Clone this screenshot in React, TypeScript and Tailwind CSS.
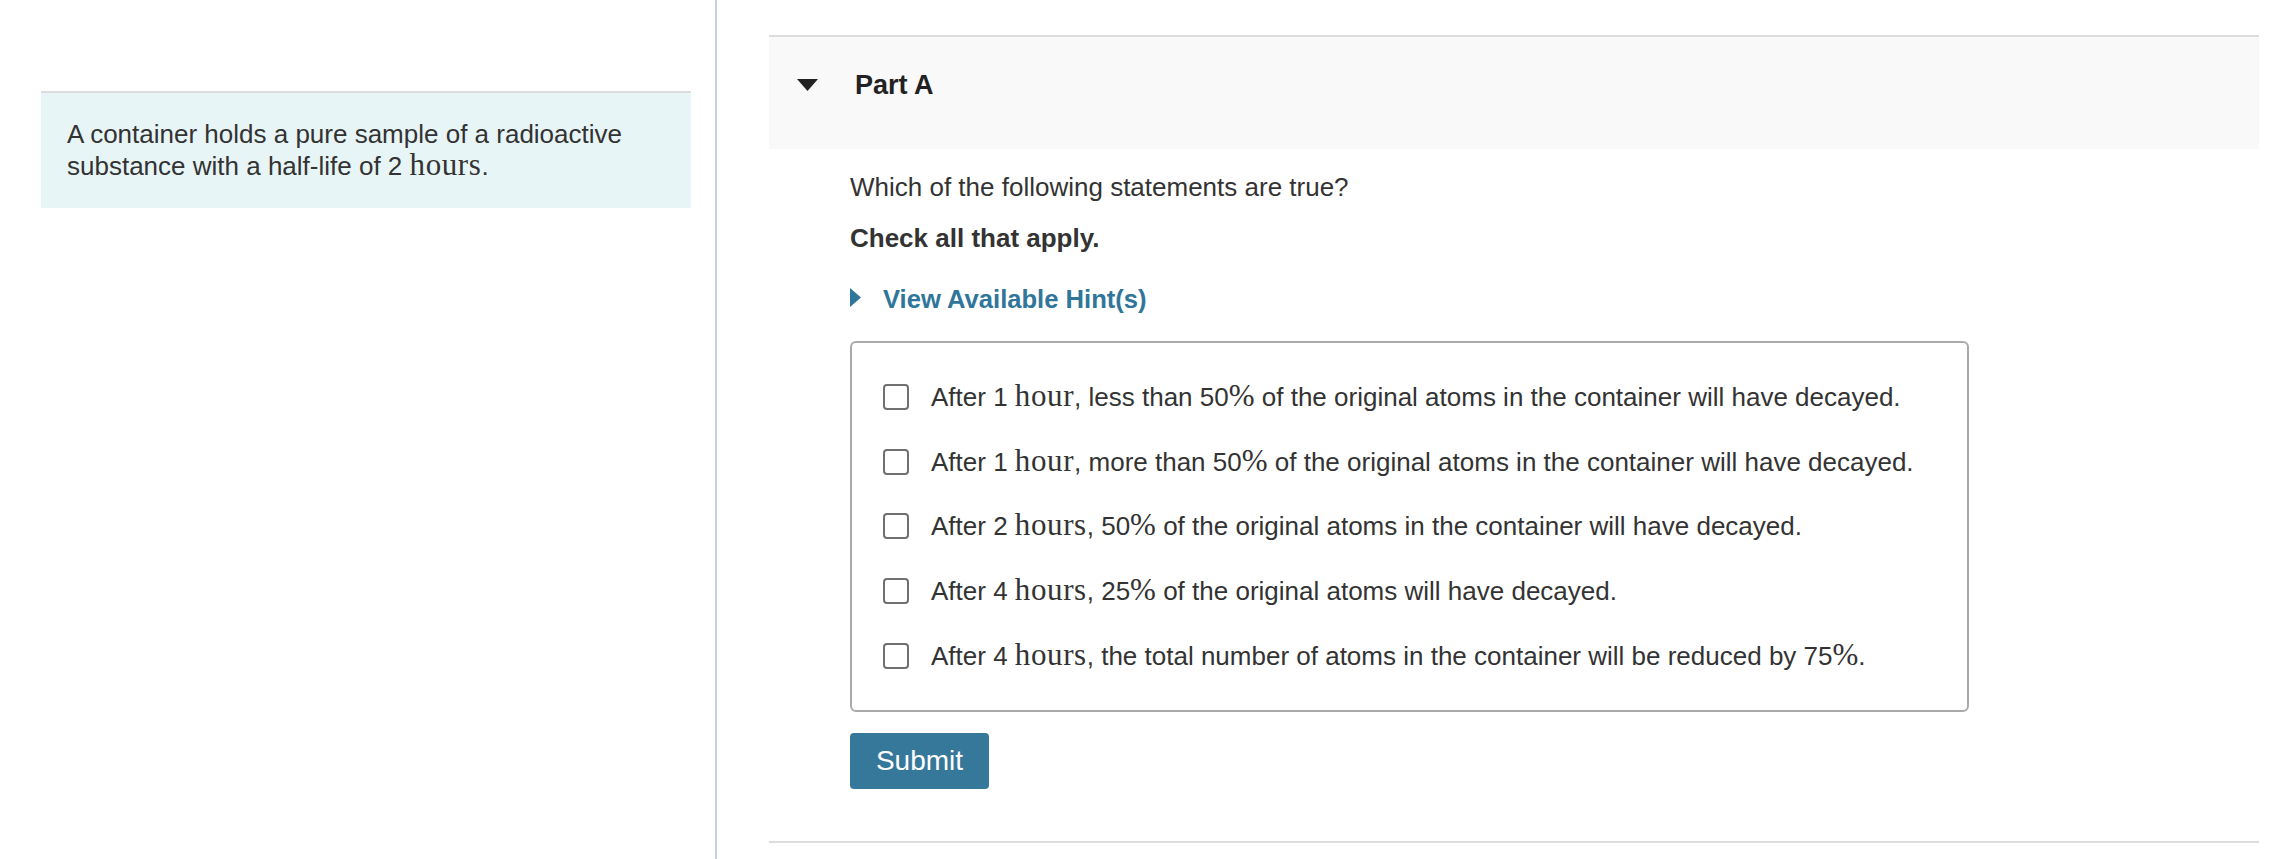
import React from "react";

function M({ children }: { children: React.ReactNode }) {
  return (
    <span className="font-['Liberation_Serif',serif] text-[31px] leading-[26px] tracking-[0.6px]">
      {children}
    </span>
  );
}

function P() {
  return <span className="font-['Liberation_Serif',serif] text-[31px] leading-[26px]">%</span>;
}

const rows: React.ReactNode[] = [
  <>
    After 1 <M>hour</M>, less than 50<P /> of the original atoms in the container will have decayed.
  </>,
  <>
    After 1 <M>hour</M>, more than 50<P /> of the original atoms in the container will have decayed.
  </>,
  <>
    After 2 <M>hours</M>, 50<P /> of the original atoms in the container will have decayed.
  </>,
  <>
    After 4 <M>hours</M>, 25<P /> of the original atoms will have decayed.
  </>,
  <>
    After 4 <M>hours</M>, the total number of atoms in the container will be reduced by 75<P />.
  </>,
];

export default function App() {
  return (
    <div className="flex h-[859px] w-full overflow-hidden bg-white font-['Liberation_Sans',Arial,sans-serif] text-[#333333]">
      {/* Left column */}
      <div className="w-[717px] shrink-0 border-r-2 border-[#c5d1de] pl-[41px] pr-[24px] pt-[91px]">
        <div className="border-t-2 border-[#dddddd] bg-[#e8f5f7] px-[26px] pt-[26px] pb-[26px] text-[26px] leading-[31.5px]">
          A container holds a pure sample of a radioactive substance with a half-life of 2 <M>hours</M>.
        </div>
      </div>

      {/* Right column */}
      <div className="flex-1 pl-[52px] pr-[20px] pt-[35px]">
        <div className="h-[114px] border-t-2 border-[#dddddd] bg-[#f9f9f9] pl-[28px] pt-[32px]">
          <div className="flex h-[32px] items-center">
            <svg width="21" height="12" viewBox="0 0 21 12" className="shrink-0">
              <polygon points="0,0 21,0 10.5,12" fill="#222222" />
            </svg>
            <span className="ml-[37px] text-[27px] font-bold leading-[32px] text-[#222222]">Part A</span>
          </div>
        </div>

        <div className="pl-[81px]">
          <p className="mt-[22px] text-[26px] leading-[32px]">Which of the following statements are true?</p>
          <p className="mt-[19px] text-[26px] font-bold leading-[32px]">Check all that apply.</p>

          <div className="mt-[29px] flex h-[32px] items-center">
            <svg width="11" height="19" viewBox="0 0 11 19" className="-mt-[4px] shrink-0">
              <polygon points="0,0 11,9.5 0,19" fill="#2f769a" />
            </svg>
            <span className="ml-[22px] text-[25.6px] font-bold leading-[32px] text-[#2f769a]">
              View Available Hint(s)
            </span>
          </div>

          <div className="mt-[26px] w-[1119px] rounded-[6px] border-2 border-[#aaaaaa] py-[22px] pl-[31px]">
            {rows.map((r, i) => (
              <div key={i} className="flex h-[64.6px] items-center">
                <span className="h-[26px] w-[26px] shrink-0 rounded-[4px] border-2 border-[#707070] bg-white" />
                <span className="ml-[22px] whitespace-nowrap text-[26px] leading-[32px]">{r}</span>
              </div>
            ))}
          </div>

          <button className="mt-[21px] flex h-[56px] w-[139px] items-center justify-center rounded-[4px] bg-[#36789a] text-[28px] leading-none text-white">
            Submit
          </button>
        </div>

        <div className="mt-[52px] border-t-2 border-[#dddddd]" />
      </div>
    </div>
  );
}
